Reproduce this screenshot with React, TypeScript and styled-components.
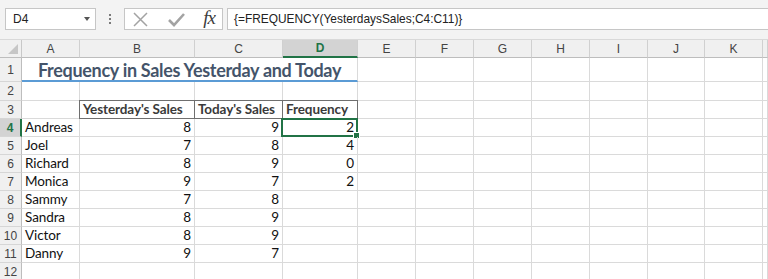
import React from "react";
import styled, { createGlobalStyle, css } from "styled-components";

const GlobalStyle = createGlobalStyle`
  html, body {
    margin: 0;
    padding: 0;
    background: #ffffff;
    overflow: hidden;
  }
  body {
    font-family: Lato, "Liberation Sans", Arial, sans-serif;
  }
`;

const COLS = [58, 115, 88, 75, 58, 58, 58, 58, 58, 57, 58];
const LETTERS = ["A", "B", "C", "D", "E", "F", "G", "H", "I", "J", "K"];
const ROW_HEIGHTS = [24, 19, 18, 18, 18, 18, 18, 18, 18, 18, 18, 18];

const Window = styled.div`
  width: 768px;
  height: 279px;
  overflow: hidden;
  background: #ffffff;
`;

const FormulaBar = styled.div`
  height: 40px;
  box-sizing: border-box;
  background: #f3f3f3;
  padding: 8px 0 0 5px;
  display: flex;
  align-items: flex-start;
  border-bottom: 1px solid #d9d9d9;
`;

const NameBox = styled.div`
  width: 91px;
  height: 22px;
  box-sizing: border-box;
  background: #fff;
  border: 1px solid #c6c6c6;
  display: flex;
  align-items: center;
  justify-content: space-between;
  padding: 0 5px 0 7px;
  font-family: "Liberation Sans", Arial, sans-serif;
  font-size: 12px;
  color: #222;
`;

const Caret = styled.span`
  width: 0;
  height: 0;
  border-left: 3.5px solid transparent;
  border-right: 3.5px solid transparent;
  border-top: 4px solid #555;
`;

const Grip = styled.div`
  width: 28px;
  height: 22px;
  display: flex;
  flex-direction: column;
  align-items: center;
  justify-content: center;
  gap: 2px;
  span {
    width: 2px;
    height: 2px;
    background: #7a7a7a;
  }
`;

const FxBox = styled.div`
  width: 99px;
  height: 22px;
  box-sizing: border-box;
  background: #fff;
  border: 1px solid #c6c6c6;
  display: flex;
  align-items: center;
  padding: 0 7px 0 7px;
  justify-content: space-between;
`;

const FxLabel = styled.span`
  font-family: "Liberation Serif", "Times New Roman", serif;
  font-style: italic;
  font-size: 19px;
  color: #3c3c3c;
  letter-spacing: -1px;
  line-height: 1;
  margin-top: -3px;
`;

const FormulaInput = styled.div`
  flex: 1;
  height: 22px;
  box-sizing: border-box;
  margin-left: 4px;
  background: #fff;
  border: 1px solid #c6c6c6;
  border-right: none;
  display: flex;
  align-items: center;
  padding-left: 6px;
  font-family: "Liberation Sans", Arial, sans-serif;
  font-size: 11.9px;
  color: #222;
`;

const Sheet = styled.div`
  display: grid;
  grid-template-columns: 22px ${COLS.map((c) => `${c}px`).join(" ")} 1fr;
  grid-template-rows: 18px ${ROW_HEIGHTS.map((h) => `${h}px`).join(" ")};
`;

const Corner = styled.div`
  background: #f0f0f0;
  border-right: 1px solid #c8c8c8;
  border-bottom: 1px solid #bdbdbd;
  display: flex;
  align-items: flex-end;
  justify-content: flex-end;
  padding: 0 3px 3px 0;
  box-sizing: border-box;
  span {
    width: 0;
    height: 0;
    border-left: 10px solid transparent;
    border-bottom: 10px solid #c6c6c6;
  }
`;

const ColHead = styled.div<{ $active?: boolean }>`
  background: ${(p) => (p.$active ? "#d3d3d3" : "#f0f0f0")};
  color: ${(p) => (p.$active ? "#217346" : "#444")};
  font-weight: ${(p) => (p.$active ? 700 : 400)};
  font-family: "Liberation Sans", Arial, sans-serif;
  font-size: 12px;
  display: flex;
  align-items: center;
  justify-content: center;
  border-right: 1px solid #d0d0d0;
  border-bottom: ${(p) => (p.$active ? "2px solid #217346" : "1px solid #bdbdbd")};
  box-sizing: border-box;
`;

const RowHead = styled.div<{ $active?: boolean }>`
  background: ${(p) => (p.$active ? "#d3d3d3" : "#f0f0f0")};
  color: ${(p) => (p.$active ? "#217346" : "#444")};
  font-weight: ${(p) => (p.$active ? 700 : 400)};
  font-family: "Liberation Sans", Arial, sans-serif;
  font-size: 12px;
  display: flex;
  align-items: center;
  justify-content: center;
  border-right: ${(p) => (p.$active ? "2px solid #217346" : "1px solid #bdbdbd")};
  border-bottom: 1px solid #d6d6d6;
  box-sizing: border-box;
`;

const Cell = styled.div<{
  $align?: "left" | "right";
  $bold?: boolean;
  $boxed?: boolean;
}>`
  position: relative;
  box-sizing: border-box;
  border-right: 1px solid #dadada;
  border-bottom: 1px solid #dadada;
  display: flex;
  align-items: flex-end;
  justify-content: ${(p) => (p.$align === "right" ? "flex-end" : "flex-start")};
  padding: 0 3px 1px 3px;
  font-size: 13.5px;
  letter-spacing: -0.1px;
  line-height: 16px;
  color: #111;
  font-weight: ${(p) => (p.$bold ? 700 : 400)};
  white-space: nowrap;
  ${(p) =>
    p.$bold &&
    css`
      color: #3a3a3a;
    `}
  ${(p) =>
    p.$boxed &&
    css`
      border: 1px solid #6f6f6f;
      margin: -1px 0 0 -1px;
    `}
`;

const ActiveFrame = styled.div`
  position: absolute;
  inset: -1px -1px -1px -2px;
  border: 2px solid #217346;
  pointer-events: none;
  &::after {
    content: "";
    position: absolute;
    right: -4px;
    bottom: -4px;
    width: 5px;
    height: 5px;
    background: #217346;
    border: 1px solid #fff;
  }
`;

const TitleCell = styled.div`
  grid-column: span 4;
  box-sizing: border-box;
  border-right: 1px solid #dadada;
  border-bottom: 2px solid #5b9bd5;
  display: flex;
  align-items: center;
  justify-content: center;
  font-weight: 700;
  font-size: 18px;
  letter-spacing: -0.3px;
  color: #44546a;
  padding-top: 1px;
  white-space: nowrap;
`;

const Empty = styled.div`
  box-sizing: border-box;
  border-right: 1px solid #dadada;
  border-bottom: 1px solid #dadada;
`;

const Icon = styled.svg`
  display: block;
`;

const data: [string, number, number, number | null][] = [
  ["Andreas", 8, 9, 2],
  ["Joel", 7, 8, 4],
  ["Richard", 8, 9, 0],
  ["Monica", 9, 7, 2],
  ["Sammy", 7, 8, null],
  ["Sandra", 8, 9, null],
  ["Victor", 8, 9, null],
  ["Danny", 9, 7, null],
];

function Blanks({ from, row }: { from: number; row: number }) {
  return (
    <>
      {COLS.slice(from).map((_, i) => (
        <Empty key={`${row}-${i}`} />
      ))}
      <Empty />
    </>
  );
}

export default function App() {
  return (
    <Window>
      <GlobalStyle />
      <FormulaBar>
        <NameBox>
          <span>D4</span>
          <Caret />
        </NameBox>
        <Grip>
          <span />
          <span />
          <span />
        </Grip>
        <FxBox>
          <Icon width="17" height="17" viewBox="0 0 17 17">
            <path d="M2 2 L15 15 M15 2 L2 15" stroke="#a3a3a3" strokeWidth="1.5" fill="none" />
          </Icon>
          <Icon width="19" height="17" viewBox="0 0 19 17">
            <path d="M2 9 L7 14 L17 3" stroke="#a3a3a3" strokeWidth="2.6" fill="none" />
          </Icon>
          <FxLabel>fx</FxLabel>
        </FxBox>
        <FormulaInput>{"{=FREQUENCY(YesterdaysSales;C4:C11)}"}</FormulaInput>
      </FormulaBar>

      <Sheet>
        <Corner>
          <span />
        </Corner>
        {LETTERS.map((l) => (
          <ColHead key={l} $active={l === "D"}>
            {l}
          </ColHead>
        ))}
        <ColHead />

        <RowHead>1</RowHead>
        <TitleCell>Frequency in Sales Yesterday and Today</TitleCell>
        <Blanks from={4} row={1} />

        <RowHead>2</RowHead>
        <Blanks from={0} row={2} />

        <RowHead>3</RowHead>
        <Empty />
        <Cell $bold $boxed>Yesterday's Sales</Cell>
        <Cell $bold $boxed>Today's Sales</Cell>
        <Cell $bold $boxed>Frequency</Cell>
        <Blanks from={4} row={3} />

        {data.map(([name, y, t, f], i) => {
          const row = i + 4;
          return (
            <React.Fragment key={name}>
              <RowHead $active={row === 4}>{row}</RowHead>
              <Cell>{name}</Cell>
              <Cell $align="right">{y}</Cell>
              <Cell $align="right">{t}</Cell>
              <Cell $align="right">
                {f}
                {row === 4 && <ActiveFrame />}
              </Cell>
              <Blanks from={4} row={row} />
            </React.Fragment>
          );
        })}

        <RowHead>12</RowHead>
        <Blanks from={0} row={12} />
      </Sheet>
    </Window>
  );
}
